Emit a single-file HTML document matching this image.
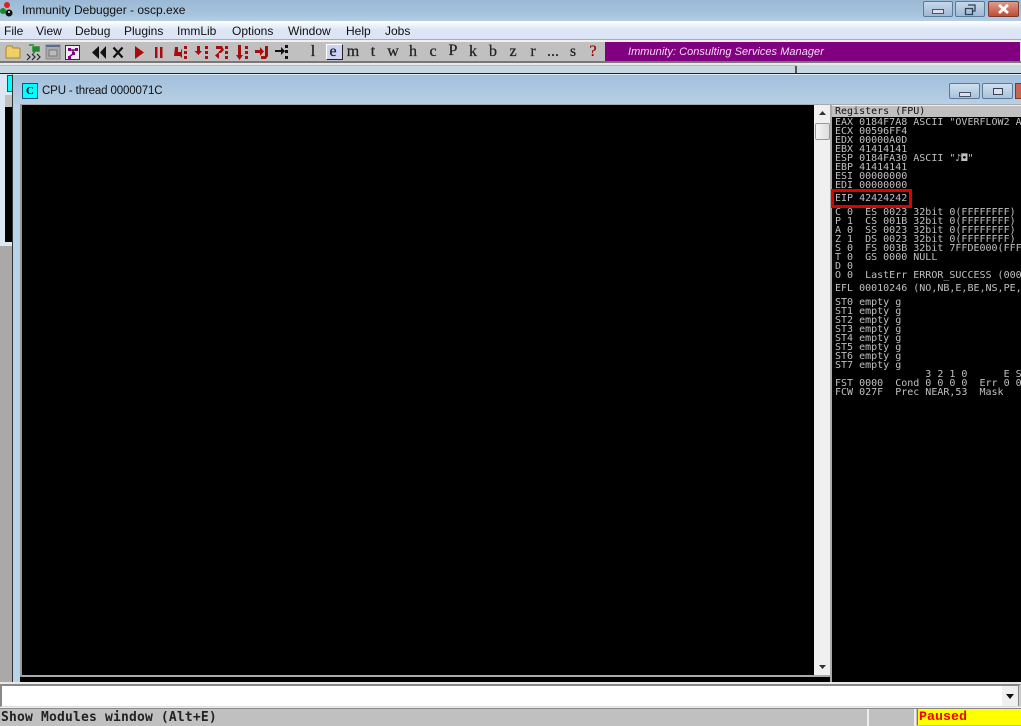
<!DOCTYPE html>
<html><head><meta charset="utf-8"><style>
html,body{margin:0;padding:0;width:1021px;height:726px;overflow:hidden;background:#a9a9a9}
div,span,svg{position:absolute}
body{font-family:"Liberation Sans",sans-serif;color:#000}
.m{font-size:12px;top:24px;white-space:nowrap;color:#111}
.l{font-family:"Liberation Serif",serif;font-size:16px;top:43px;width:20px;text-align:center;color:#222;line-height:18px;-webkit-text-stroke:.25px #222}
.r{font-family:"DejaVu Sans Mono",monospace;font-size:10px;line-height:10px;height:10px;color:#c0c0c0;left:835px;white-space:pre}
</style></head><body>
<div style="left:0;top:0;width:1021px;height:21px;background:linear-gradient(#9bb9d6,#a6c2dc 60%,#b3cde4)"></div>
<svg style="left:0;top:1px" width="16" height="18" viewBox="0 0 16 18"><circle cx="7" cy="4" r="3" fill="#e02020"/><circle cx="3" cy="10" r="3" fill="#1a8a2a"/><circle cx="9" cy="12" r="3.500" fill="#111"/><circle cx="9" cy="11" r="1" fill="#eee"/></svg>
<div style="left:22px;top:2px;font-size:12px;line-height:16px;white-space:nowrap;color:#111">Immunity Debugger - oscp.exe</div>
<div style="left:923px;top:1px;width:28px;height:14px;border:1px solid #5b7a99;border-radius:2px;background:linear-gradient(#c6d8ea,#9db9d5)"></div>
<div style="left:932px;top:9px;width:10px;height:3px;background:#dde;border:1px solid #456"></div>
<div style="left:955px;top:1px;width:28px;height:14px;border:1px solid #5b7a99;border-radius:2px;background:linear-gradient(#c6d8ea,#9db9d5)"></div>
<svg style="left:964px;top:4px" width="13" height="12"><path d="M4 1h7v6H9M1.500 4.500h7v6h-7z" fill="none" stroke="#2d4258" stroke-width="1.300"/></svg>
<div style="left:988px;top:1px;width:29px;height:14px;border:1px solid #7a3a30;border-radius:2px;background:linear-gradient(#dc9c8c,#c24d35)"></div>
<svg style="left:997px;top:4px" width="14" height="11"><path d="M2 1l9 8M11 1L2 9" stroke="#fff" stroke-width="2.800"/></svg>

<div style="left:0;top:21px;width:1021px;height:18px;background:linear-gradient(#fff,#dbe5f6 50%,#dbe5f6)"></div>
<div class="m" style="left:4px">File</div><div class="m" style="left:36px">View</div><div class="m" style="left:75px">Debug</div><div class="m" style="left:124px">Plugins</div><div class="m" style="left:177px">ImmLib</div><div class="m" style="left:232px">Options</div><div class="m" style="left:288px">Window</div><div class="m" style="left:346px">Help</div><div class="m" style="left:385px">Jobs</div>

<div style="left:0;top:39px;width:1021px;height:1px;background:#aaa"></div>
<div style="left:0;top:40px;width:1021px;height:2px;background:#efefef"></div>
<div style="left:0;top:42px;width:1021px;height:20px;background:#c0c0c0"></div>
<div style="left:0;top:61px;width:1021px;height:2px;background:#777"></div>
<div style="left:0;top:63px;width:1021px;height:2px;background:#e8e8e8"></div>
<div style="left:0;top:65px;width:795px;height:8px;background:#c8d8e2;border-top:1px solid #9ca"></div>
<div style="left:796px;top:65px;width:225px;height:8px;background:#c8d8e2"></div>
<div style="left:795px;top:66px;width:2px;height:7px;background:#555"></div>
<div style="left:0;top:73px;width:1021px;height:1px;background:#222"></div>
<svg style="left:0;top:42px" width="300" height="20" viewBox="0 0 300 20">
<path d="M6 6l1-2h5l1 2h6l1 1v9H6z" fill="#f0cf6a" stroke="#a8862d"/>
<path d="M29 3h5M33 5h6v4h-6zM35 9l-2 3" stroke="#1d8a2f" fill="#1d8a2f" stroke-width="1.500"/><path d="M27 12l3 3-3 3M32 12l3 3-3 3M37 12l3 3-3 3" stroke="#222" fill="none" stroke-width="1.200"/>
<rect x="46" y="3" width="14" height="14" fill="#aaa" stroke="#888"/><rect x="46" y="3" width="14" height="2" fill="#5a6a9a"/><rect x="49" y="8" width="8" height="6" fill="#bbb" stroke="#777"/>
<rect x="65.500" y="3.500" width="14" height="14" fill="#eee" stroke="#333"/><rect x="68" y="6" width="3" height="3" fill="#800080"/><rect x="75" y="6" width="3" height="3" fill="#800080"/><rect x="72" y="10" width="3" height="3" fill="#800080"/><rect x="68" y="14" width="3" height="3" fill="#800080"/><path d="M70 8h6M73 8v5M69 15l4-3" stroke="#800080" stroke-width="1.500"/>
<path d="M99 4L92 10.500l7 6.500zM106 4l-6 6.500 6 6.500z" fill="#111"/>
<path d="M113.500 5.500l9 10M122.500 5.500l-9 10" stroke="#111" stroke-width="2.200"/>
<path d="M135 4l9 6.500-9 6.500z" fill="#a80d0d"/>
<path d="M155 5h2.500v11H155zM160 5h2.500v11H160z" fill="#a80d0d"/>
<g fill="#a80d0d"><path d="M175 5h3v5h3V7l1 1v8l-2-2h-6zM184 4h3v3h-3zM184 9h3v3h-3zM184 14h3v3h-3z"/>
<path d="M197 4h3v5h2l-3.500 4-4-4h2.500zM205 4h3v3h-3zM205 9h3v3h-3zM205 14h3v3h-3z"/>
<path d="M216 4h6l2 4-3 3h-2v-2h1l1-2h-5zM219 10v7l-4-3.500zM225 4h3v3h-3zM225 9h3v3h-3zM225 14h3v3h-3z"/>
<path d="M238 3h3v10h2l-3.500 5-3.500-5h2zM245 4h3v3h-3zM245 9h3v3h-3zM245 14h3v3h-3z"/>
<path d="M255 8h5V5l4 4.500-4 4.500v-3h-5zM265 4h3v10l-2 3h-5v-3h4z"/></g>
<path d="M275 8h6V5l4 4-4 4v-3h-6z" fill="#111"/><path d="M285 3h3v3h-3zM285 8h3v3h-3zM285 14h3v3h-3z" fill="#111"/>
</svg>
<div class="l" style="left:303px">l</div>
<div style="left:326px;top:44px;width:15px;height:14px;background:#ccd3f5;border-right:1px solid #222;border-bottom:1px solid #222;border-top:1px solid #fff;border-left:1px solid #fff"></div>
<div class="l" style="left:323px">e</div><div class="l" style="left:343px">m</div><div class="l" style="left:363px">t</div><div class="l" style="left:383px">w</div><div class="l" style="left:403px">h</div><div class="l" style="left:423px">c</div><div class="l" style="left:443px;top:42px">P</div><div class="l" style="left:463px">k</div><div class="l" style="left:483px">b</div><div class="l" style="left:503px">z</div><div class="l" style="left:523px">r</div><div class="l" style="left:543px">...</div><div class="l" style="left:563px">s</div><div class="l" style="left:583px;color:#a00000;-webkit-text-stroke:.25px #a00000">?</div>
<div style="left:605px;top:42px;width:415px;height:19px;background:#800080;border-right:1px solid #ddd"></div>
<div style="left:628px;top:45px;font-size:11px;line-height:14px;font-style:italic;color:#f6d9f6;white-space:nowrap;letter-spacing:.04px">Immunity: Consulting Services Manager</div>

<div style="left:0;top:74px;width:1021px;height:611px;background:#a9a9a9"></div>
<div style="left:0;top:74px;width:13px;height:172px;background:#dbe8f3"></div>
<div style="left:5px;top:107px;width:8px;height:135px;background:#000"></div>
<div style="left:5px;top:95px;width:8px;height:12px;background:#c0c0c0"></div>
<div style="left:7px;top:75px;width:8px;height:15px;background:#0ff;border:1px solid #158"></div>
<div style="left:12px;top:74px;width:1009px;height:611px;background:#b8d3ea;border-left:1px solid #333;box-sizing:border-box;border-top:1px solid #e4eef6"></div>
<div style="left:13px;top:75px;width:1008px;height:29px;background:linear-gradient(#a2bedb,#b7d0e6)"></div>
<div style="left:22px;top:83px;width:14px;height:14px;background:#0ff;border:1px solid #157;font:bold 11px/14px 'Liberation Serif',serif;text-align:center;color:#000">C</div>
<div style="left:42px;top:84px;font-size:11.500px;line-height:15px;white-space:nowrap;color:#111;letter-spacing:-.14px">CPU - thread 0000071C</div>
<div style="left:949px;top:83px;width:29px;height:14px;border:1px solid #5b7a99;border-radius:2px;background:linear-gradient(#d0e0ef,#a9c3dc)"></div>
<div style="left:959px;top:92px;width:10px;height:3px;background:#dde;border:1px solid #456"></div>
<div style="left:982px;top:83px;width:29px;height:14px;border:1px solid #5b7a99;border-radius:2px;background:linear-gradient(#d0e0ef,#a9c3dc)"></div>
<div style="left:993px;top:88px;width:8px;height:5px;background:#dde;border:1px solid #345"></div>
<div style="left:1015px;top:83px;width:6px;height:14px;background:#c9654e;border:1px solid #7a3a30"></div>

<div style="left:20px;top:104px;width:1001px;height:2px;background:#aaa"></div>
<div style="left:22px;top:105px;width:792px;height:570px;background:#000"></div>
<div style="left:20px;top:104px;width:2px;height:578px;background:#999"></div>
<div style="left:22px;top:675px;width:808px;height:2px;background:#aaa"></div>
<div style="left:20px;top:677px;width:810px;height:5px;background:#000"></div>
<div style="left:814px;top:105px;width:16px;height:570px;background:#f0f0f0"></div>
<svg style="left:814px;top:105px" width="16" height="16"><path d="M5 10l3.500-4 3.500 4z" fill="#333"/></svg>
<div style="left:815px;top:123px;width:13px;height:15px;background:linear-gradient(90deg,#f5f5f5,#ddd);border:1px solid #999;border-radius:2px"></div>
<svg style="left:814px;top:659px" width="16" height="16"><path d="M5 6l3.500 4 3.500-4z" fill="#333"/></svg>
<div style="left:830px;top:105px;width:2px;height:577px;background:#aaa"></div>
<div style="left:832px;top:105px;width:189px;height:577px;background:#000"></div>
<div style="left:832px;top:105px;width:189px;height:12px;background:#c0c0c0;border-top:1px solid #eee;box-sizing:border-box"></div>
<div class="r" style="top:107px;color:#111">Registers (FPU)</div>
<div class="r" style="top:118px">EAX 0184F7A8 ASCII "OVERFLOW2 A</div>
<div class="r" style="top:127px">ECX 00596FF4</div>
<div class="r" style="top:136px">EDX 00000A0D</div>
<div class="r" style="top:145px">EBX 41414141</div>
<div class="r" style="top:154px">ESP 0184FA30 ASCII "♪◘"</div>
<div class="r" style="top:163px">EBP 41414141</div>
<div class="r" style="top:172px">ESI 00000000</div>
<div class="r" style="top:181px">EDI 00000000</div>
<div class="r" style="top:194px">EIP 42424242</div>
<div style="left:831px;top:189px;width:75px;height:13px;border:3px solid #e00000"></div>
<div class="r" style="top:208px">C 0  ES 0023 32bit 0(FFFFFFFF)</div>
<div class="r" style="top:217px">P 1  CS 001B 32bit 0(FFFFFFFF)</div>
<div class="r" style="top:226px">A 0  SS 0023 32bit 0(FFFFFFFF)</div>
<div class="r" style="top:235px">Z 1  DS 0023 32bit 0(FFFFFFFF)</div>
<div class="r" style="top:244px">S 0  FS 003B 32bit 7FFDE000(FFF</div>
<div class="r" style="top:253px">T 0  GS 0000 NULL</div>
<div class="r" style="top:262px">D 0</div>
<div class="r" style="top:271px">O 0  LastErr ERROR_SUCCESS (000</div>
<div class="r" style="top:284px">EFL 00010246 (NO,NB,E,BE,NS,PE,</div>
<div class="r" style="top:298px">ST0 empty g</div>
<div class="r" style="top:307px">ST1 empty g</div>
<div class="r" style="top:316px">ST2 empty g</div>
<div class="r" style="top:325px">ST3 empty g</div>
<div class="r" style="top:334px">ST4 empty g</div>
<div class="r" style="top:343px">ST5 empty g</div>
<div class="r" style="top:352px">ST6 empty g</div>
<div class="r" style="top:361px">ST7 empty g</div>
<div class="r" style="top:370px">               3 2 1 0      E S</div>
<div class="r" style="top:379px">FST 0000  Cond 0 0 0 0  Err 0 0</div>
<div class="r" style="top:388px">FCW 027F  Prec NEAR,53  Mask</div>

<div style="left:0;top:682px;width:1021px;height:2px;background:#e8e8e8"></div>
<div style="left:0;top:684px;width:1021px;height:23px;background:#fff;box-sizing:border-box;border-top:2px solid #888;border-left:2px solid #888;border-right:2px solid #ccc;border-bottom:1px solid #ddd"></div>
<div style="left:1002px;top:686px;width:16px;height:20px;background:#f0f0f0;border-right:1px solid #888"></div>
<svg style="left:1002px;top:686px" width="16" height="20"><path d="M4 8h8l-4 5z" fill="#111"/></svg>
<div style="left:0;top:707px;width:1021px;height:1px;background:#eee"></div>
<div style="left:0;top:708px;width:1021px;height:18px;background:#c0c0c0;border-top:1px solid #888;box-sizing:border-box"></div>
<div style="left:1px;top:711px;font:bold 13px/14px 'DejaVu Sans Mono',monospace;letter-spacing:.17px;white-space:pre;color:#222">Show Modules window (Alt+E)</div>
<div style="left:867px;top:709px;width:2px;height:17px;background:#eee"></div>
<div style="left:914px;top:709px;width:2px;height:17px;background:#eee"></div>
<div style="left:917px;top:709px;width:103px;height:16px;background:#ff0;border-left:1px solid #777;border-right:1px solid #222"></div>
<div style="left:919px;top:711px;font:bold 13.330px/14px 'Liberation Mono',monospace;color:#f00000;white-space:pre">Paused</div>
</body></html>
